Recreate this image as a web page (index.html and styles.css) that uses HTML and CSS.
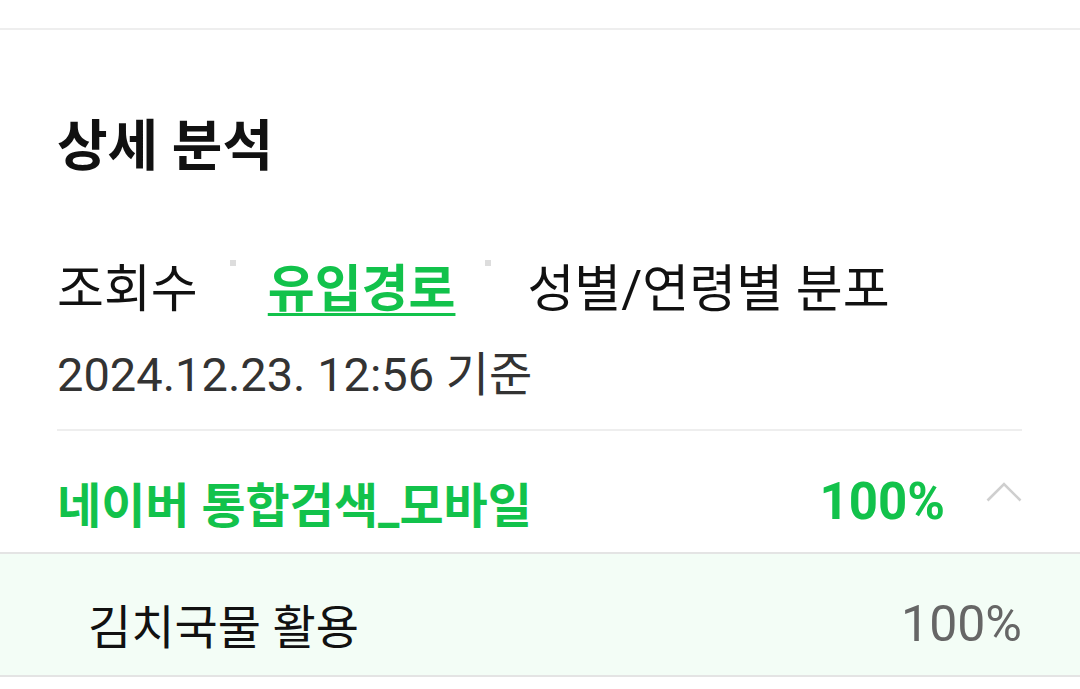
FILE: index.html
```html
<!DOCTYPE html>
<html lang="ko">
<head>
<meta charset="utf-8">
<link rel="stylesheet" href="styles.css">
</head>
<body>
<div class="topline"></div>
<section class="detail">
  <h2 class="title">상세 분석</h2>
  <nav class="tabs">
    <span class="tab">조회수</span>
    <span class="sep"></span>
    <span class="tab active">유입경로</span>
    <span class="sep"></span>
    <span class="tab">성별/연령별 분포</span>
  </nav>
  <p class="date">2024.12.23. 12:56 기준</p>
  <div class="divider"></div>
  <div class="group-head">
    <span class="group-name">네이버 통합검색_모바일</span>
    <span class="group-pct">100%</span>
    <svg class="chev" width="36" height="20" viewBox="0 0 36 20"><path d="M1.5 18.5 L18 2 L34.5 18.5" fill="none" stroke="#cfcfcf" stroke-width="2.6"/></svg>
  </div>
</section>
<div class="sub-list">
  <div class="sub-row">
    <span class="sub-name">김치국물 활용</span>
    <span class="sub-pct">100%</span>
  </div>
</div>
</body>
</html>
```
FILE: styles.css
```css
html, body {
  margin: 0;
  padding: 0;
  background: #ffffff;
}
body {
  font-family: Roboto, "Noto Sans CJK KR", sans-serif;
  color: #111;
  width: 1080px;
  overflow: hidden;
}
.topline {
  height: 28px;
  border-bottom: 2px solid #eeeeee;
}
.detail {
  padding: 0 58px 0 57px;
}
.title {
  margin: 0;
  padding-top: 86px;
  font-size: 55px;
  font-weight: 700;
  line-height: 60px;
  color: #111;
}
.tabs {
  display: flex;
  align-items: flex-start;
  margin-top: 84px;
  font-size: 51px;
  line-height: 60px;
}
.tab {
  color: #111;
}
.tab.active {
  color: #12c24b;
  font-weight: 700;
  text-decoration: underline;
  text-decoration-thickness: 3px;
  text-underline-offset: 6px;
}
.sep {
  width: 6px;
  height: 6px;
  background: #dddddd;
  margin: 0 32px;
}
.sep + .tab.active + .sep {
  margin: 0 36px 0 30px;
}
.date {
  margin: 25px 0 0;
  font-size: 47px;
  line-height: 60px;
  color: #333;
}
.divider {
  margin-top: 24px;
  border-top: 2px solid #eeeeee;
}
.group-head {
  display: flex;
  align-items: center;
  box-sizing: border-box;
  height: 121px;
  padding-top: 20px;
}
.group-name {
  flex: 1;
  font-size: 48px;
  font-weight: 700;
  color: #12c24b;
}
.group-pct {
  font-size: 51px;
  font-weight: 700;
  color: #12c24b;
  margin-right: 41px;
}
.chev {
  margin-bottom: 20px;
}
.sub-list {
  border-top: 2px solid #e4e4e4;
  border-bottom: 2px solid #e4e4e4;
  background: #f3fdf6;
}
.sub-row {
  display: flex;
  align-items: center;
  justify-content: space-between;
  box-sizing: border-box;
  height: 121px;
  padding: 18px 58px 0 88px;
}
.sub-name {
  font-size: 47px;
  color: #111;
}
.sub-pct {
  font-size: 50px;
  color: #666;
}
```
